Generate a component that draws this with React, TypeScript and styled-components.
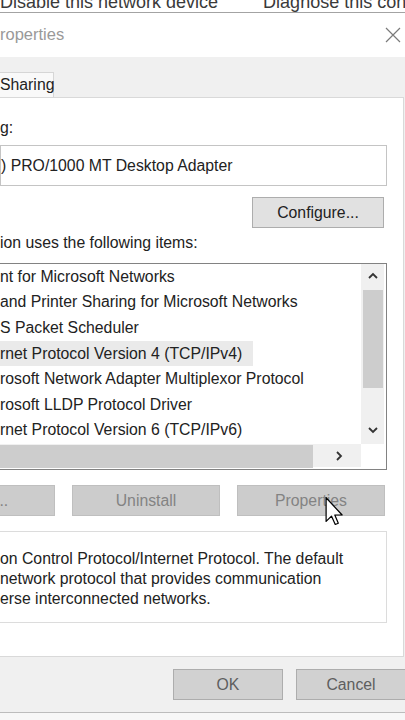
import styled, { createGlobalStyle } from "styled-components";

const GlobalStyle = createGlobalStyle`
  html, body {
    margin: 0;
    padding: 0;
    background: #f7f7f7;
  }
  body {
    font-family: "Liberation Sans", Arial, sans-serif;
    color: #222;
  }
`;

const Page = styled.div`
  position: relative;
  width: 405px;
  height: 720px;
  overflow: hidden;
  background: #f7f7f7;
`;

const TopStrip = styled.div`
  height: 12px;
  overflow: hidden;
  background: #fff;
  border-bottom: 1px solid #a3a3a3;
  display: flex;
  gap: 45px;
  white-space: nowrap;
`;

const StripLink = styled.span`
  font-size: 18px;
  line-height: 18px;
  margin-top: -7px;
  color: #3a3a3a;
`;

const Dialog = styled.div`
  margin-left: -20px;
  width: 430px;
  border-bottom: 1px solid #bcbcbc;
`;

const TitleBar = styled.div`
  height: 44px;
  background: #fff;
  display: flex;
  align-items: center;
  justify-content: space-between;
  padding: 0 9px 0 20px;
  box-sizing: border-box;
`;

const Title = styled.span`
  font-size: 16.5px;
  color: #999;
  margin-top: -2px;
`;

const Body = styled.div`
  background: #f0f0f0;
  padding: 15px 0 12px 0;
`;

const TabStrip = styled.div`
  display: flex;
  height: 25px;
`;

const Tab = styled.div`
  width: 74px;
  box-sizing: border-box;
  border: 1px solid #d6d6d6;
  border-bottom: none;
  background: #f9f9f9;
  padding-left: 19px;
  font-size: 15.8px;
  line-height: 24px;
  color: #222;
`;

const Panel = styled.div`
  width: 424px;
  height: 560px;
  box-sizing: border-box;
  background: #fff;
  border: 1px solid #d9d9d9;
  padding: 20px 16px 0 19px;
  display: flex;
  flex-direction: column;
`;

const Label = styled.div<{ $top?: number }>`
  font-size: 15.8px;
  line-height: 20px;
  margin-top: ${(p) => p.$top ?? 0}px;
  white-space: nowrap;
`;

const TextBox = styled.div`
  margin-top: 7px;
  height: 41px;
  box-sizing: border-box;
  border: 1px solid #c4c4c4;
  display: flex;
  align-items: center;
  font-size: 15.8px;
  color: #222;
  white-space: nowrap;
`;

const Button = styled.div<{ $w: number; $disabled?: boolean; $dim?: boolean; $shift?: number }>`
  width: ${(p) => p.$w}px;
  margin-left: ${(p) => p.$shift ?? 0}px;
  height: 31px;
  box-sizing: border-box;
  flex-shrink: 0;
  display: flex;
  align-items: center;
  justify-content: center;
  font-size: 15.8px;
  white-space: nowrap;
  overflow: hidden;
  background: ${(p) => (p.$disabled ? "#cccccc" : p.$dim ? "#d1d1d1" : "#e1e1e1")};
  border: 1px solid ${(p) => (p.$disabled ? "#bfbfbf" : "#adadad")};
  color: ${(p) => (p.$disabled ? "#838383" : p.$dim ? "#5e5e5e" : "#222")};
`;

const ConfigureRow = styled.div`
  margin-top: 11px;
  display: flex;
  justify-content: flex-end;
  padding-right: 3px;
`;

const List = styled.div`
  margin-top: 10px;
  height: 207px;
  box-sizing: border-box;
  border: 1px solid #828282;
  padding: 0 2px 2px 0;
  display: grid;
  grid-template-columns: 1fr 23px;
  grid-template-rows: 1fr 23px;
  margin-left: -19px;
`;

const Rows = styled.div`
  overflow: hidden;
  padding-left: 18px;
`;

const Row = styled.div<{ $selected?: boolean }>`
  height: 25.6px;
  display: flex;
  align-items: center;
  font-size: 15.8px;
  white-space: nowrap;
  width: ${(p) => (p.$selected ? "253px" : "auto")};
  margin-left: -18px;
  padding-left: 18px;
  background: ${(p) => (p.$selected ? "#eaeaea" : "transparent")};
`;

const VScroll = styled.div`
  background: #f0f0f0;
  display: flex;
  flex-direction: column;
  align-items: center;
`;

const Arrow = styled.div`
  height: 26px;
  width: 100%;
  display: flex;
  align-items: center;
  justify-content: center;
`;

const VThumb = styled.div`
  width: 20px;
  height: 98px;
  background: #cdcdcd;
`;

const Spacer = styled.div`
  flex: 1;
`;

const HScroll = styled.div`
  background: #f0f0f0;
  display: flex;
  align-items: center;
`;

const HThumb = styled.div`
  width: 331px;
  height: 100%;
  background: #cdcdcd;
  margin-top: 1px;
`;

const HArrow = styled.div`
  flex: 1;
  display: flex;
  justify-content: center;
  padding-left: 4px;
`;

const Corner = styled.div`
  background: #fff;
`;

const ButtonRow = styled.div`
  margin-top: 15px;
  display: flex;
  gap: 17px;
  height: 30px;
`;

const Description = styled.div`
  margin-top: 16px;
  height: 92px;
  box-sizing: border-box;
  border: 1px solid #dcdcdc;
  border-left: none;
  padding-top: 17px;
  font-size: 15.8px;
  line-height: 20px;
  white-space: nowrap;
`;

const Footer = styled.div`
  margin-top: 12px;
  display: flex;
  justify-content: flex-end;
  gap: 13px;
  padding-right: 4px;
`;

const Cursor = styled.svg`
  position: absolute;
  left: 325px;
  top: 497px;
`;

const Chevron = ({ dir }: { dir: "up" | "down" | "right" }) => {
  const d =
    dir === "up" ? "M1 6 L5 2 L9 6" : dir === "down" ? "M1 2 L5 6 L9 2" : "M3 1 L7 5 L3 9";
  return (
    <svg width="10" height="10" viewBox="0 0 10 10">
      <path d={d} fill="none" stroke="#333" strokeWidth="1.8" />
    </svg>
  );
};

const items = [
  "nt for Microsoft Networks",
  "and Printer Sharing for Microsoft Networks",
  "S Packet Scheduler",
  "rnet Protocol Version 4 (TCP/IPv4)",
  "rosoft Network Adapter Multiplexor Protocol",
  "rosoft LLDP Protocol Driver",
  "rnet Protocol Version 6 (TCP/IPv6)",
];

export default function App() {
  return (
    <Page>
      <GlobalStyle />
      <TopStrip>
        <StripLink>Disable this network device</StripLink>
        <StripLink>Diagnose this connection</StripLink>
      </TopStrip>
      <Dialog>
        <TitleBar>
          <Title>roperties</Title>
          <svg width="16" height="16" viewBox="0 0 16 16">
            <path d="M1 1 L15 15 M15 1 L1 15" stroke="#7a7a7a" strokeWidth="1.2" />
          </svg>
        </TitleBar>
        <Body>
          <TabStrip>
            <Tab>Sharing</Tab>
          </TabStrip>
          <Panel>
            <Label>g:</Label>
            <TextBox>) PRO/1000 MT Desktop Adapter</TextBox>
            <ConfigureRow>
              <Button $w={132}>Configure...</Button>
            </ConfigureRow>
            <Label $top={5}>ion uses the following items:</Label>
            <List>
              <Rows>
                {items.map((t, i) => (
                  <Row key={t} $selected={i === 3}>
                    {t}
                  </Row>
                ))}
              </Rows>
              <VScroll>
                <Arrow>
                  <Chevron dir="up" />
                </Arrow>
                <VThumb />
                <Spacer />
                <Arrow>
                  <Chevron dir="down" />
                </Arrow>
              </VScroll>
              <HScroll>
                <HThumb />
                <HArrow>
                  <Chevron dir="right" />
                </HArrow>
              </HScroll>
              <Corner />
            </List>
            <ButtonRow>
              <Button $w={148} $shift={-93} $disabled>
                Install...
              </Button>
              <Button $w={148} $disabled>
                Uninstall
              </Button>
              <Button $w={148} $disabled>
                Properties
              </Button>
            </ButtonRow>
            <Description>
              on Control Protocol/Internet Protocol. The default
              <br />
              network protocol that provides communication
              <br />
              erse interconnected networks.
            </Description>
          </Panel>
          <Footer>
            <Button $w={110} $dim>
              OK
            </Button>
            <Button $w={110} $dim>
              Cancel
            </Button>
          </Footer>
        </Body>
      </Dialog>
      <Cursor width="19" height="29" viewBox="0 0 12 19">
        <path
          d="M0.5 0.5 L0.5 16 L4 12.5 L6.5 18 L8.5 17.2 L6.2 11.8 L11 11.8 Z"
          fill="#fff"
          stroke="#000"
          strokeWidth="0.8"
          strokeLinejoin="round"
        />
      </Cursor>
    </Page>
  );
}
